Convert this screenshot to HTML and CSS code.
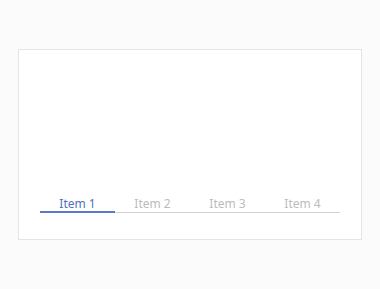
FILE: index.html
```html
<!DOCTYPE html>
<html lang="en">
<head>
    <meta charset="UTF-8">
    <title>Tabs</title>
    <link rel="stylesheet" href="styles.css">
</head>
<body>
    <div class="card">
        <ul class="tabs">
            <li class="tab active">Item 1</li>
            <li class="tab">Item 2</li>
            <li class="tab">Item 3</li>
            <li class="tab">Item 4</li>
        </ul>
    </div>
</body>
</html>
```
FILE: styles.css
```css
* {
    box-sizing: border-box;
}

body {
    margin: 0;
    padding: 49px 18px;
    background: #fcfbfb;
    font-family: "Noto Sans", sans-serif;
}

.card {
    height: 191px;
    background: #fff;
    border: 1px solid #e4e4e4;
    display: flex;
    flex-direction: column;
    justify-content: flex-end;
    padding: 0 21px 26px;
}

.tabs {
    list-style: none;
    margin: 0;
    padding: 0;
    display: flex;
    border-bottom: 1px solid #d2d2d2;
}

.tab {
    flex: 1;
    text-align: center;
    font-size: 12px;
    line-height: 14px;
    color: #bcbcbc;
    border-bottom: 2px solid transparent;
    margin-bottom: -1px;
    cursor: pointer;
}

.tab.active {
    color: #4f70c2;
    border-bottom-color: #5b79c6;
}
```
